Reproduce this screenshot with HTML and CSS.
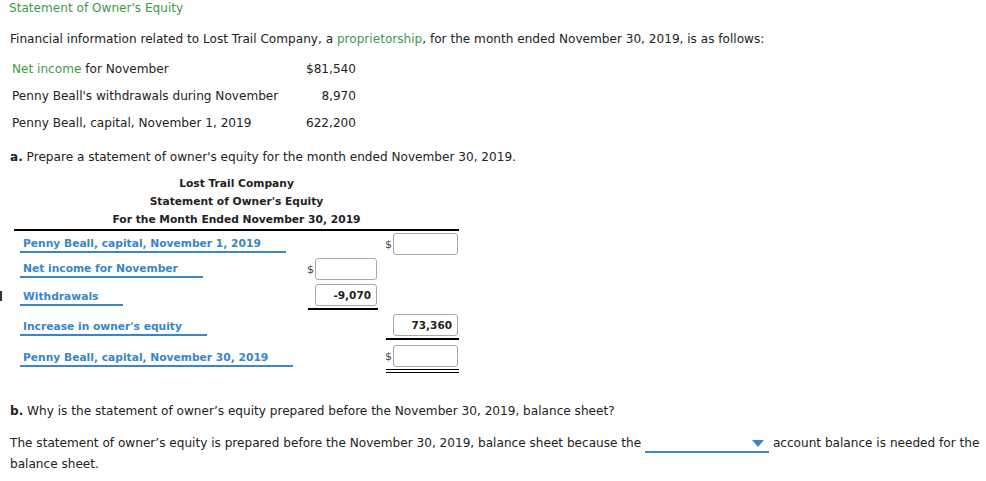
FILE: index.html
```html
<!DOCTYPE html>
<html lang="en">
<head>
  <meta charset="UTF-8" />
  <title>Statement of Owner's Equity</title>
  <link rel="stylesheet" href="styles.css">
</head>
<body>
  <div class="page">
    <div class="title">Statement of Owner's Equity</div>

    <p class="intro">Financial information related to Lost Trail Company, a <span class="term">proprietorship</span>, for the month ended November 30, 2019, is as follows:</p>

    <table class="given">
      <tr>
        <td><span class="term">Net income</span> for November</td>
        <td class="amt">$81,540</td>
      </tr>
      <tr>
        <td>Penny Beall's withdrawals during November</td>
        <td class="amt">8,970</td>
      </tr>
      <tr>
        <td>Penny Beall, capital, November 1, 2019</td>
        <td class="amt">622,200</td>
      </tr>
    </table>

    <p class="question"><b>a.</b> Prepare a statement of owner's equity for the month ended November 30, 2019.</p>

    <div class="statement">
      <div class="heading">
        <div>Lost Trail Company</div>
        <div>Statement of Owner's Equity</div>
        <div>For the Month Ended November 30, 2019</div>
      </div>

      <div class="row r1">
        <div class="label"><span>Penny Beall, capital, November 1, 2019</span></div>
        <div class="cell c1"></div>
        <div class="cell c2"><span class="dollar">$</span><input class="box" type="text"></div>
      </div>
      <div class="row r2">
        <div class="label"><span>Net income for November</span></div>
        <div class="cell c1"><span class="dollar">$</span><input class="box" type="text"></div>
        <div class="cell c2"></div>
      </div>
      <div class="row r3">
        <span class="marker"></span>
        <div class="label"><span>Withdrawals</span></div>
        <div class="cell c1 single"><input class="box" type="text" value="-9,070"></div>
        <div class="cell c2"></div>
      </div>
      <div class="row r4">
        <div class="label"><span>Increase in owner's equity</span></div>
        <div class="cell c1"></div>
        <div class="cell c2 single"><input class="box" type="text" value="73,360"></div>
      </div>
      <div class="row r5">
        <div class="label"><span>Penny Beall, capital, November 30, 2019</span></div>
        <div class="cell c1"></div>
        <div class="cell c2 double"><span class="dollar">$</span><input class="box" type="text"></div>
      </div>
    </div>

    <p class="question b"><b>b.</b> Why is the statement of owner’s equity prepared before the November 30, 2019, balance sheet?</p>

    <p class="answer">The statement of owner’s equity is prepared before the November 30, 2019, balance sheet because the <span class="select"><span class="arrow"></span></span> account balance is needed for the balance sheet.</p>
  </div>
</body>
</html>
```

FILE: styles.css
```css
body {
  margin: 0;
  padding: 0;
  font-family: 'DejaVu Sans', Verdana, sans-serif;
  font-size: 12.1px;
  color: #222;
  background: #fff;
}
.page {
  position: relative;
  padding: 0 0 0 9px;
}
.title {
  color: #3f9b46;
  line-height: 16px;
}
.term {
  color: #3f9b46;
}
.intro {
  margin: 15px 0 0 1px;
  line-height: 16px;
}
.given {
  border-collapse: collapse;
  width: 344px;
  margin: 8px 0 0 3px;
}
.given td {
  padding: 0;
  height: 27px;
}
.given .amt {
  text-align: right;
}
.question {
  margin: 13px 0 0 1px;
  line-height: 16px;
}
.statement {
  width: 445px;
  margin: 10px 0 0 5px;
}
.heading {
  text-align: center;
  font-weight: bold;
  font-size: 10.7px;
  line-height: 18px;
  border-bottom: 2px solid #000;
}
.row {
  position: relative;
  display: grid;
  grid-template-columns: 294px 70px 81px;
  align-items: end;
}
.r1 { height: 25px; }
.r2 { height: 26px; }
.r3 { height: 28px; }
.r4 { height: 30px; }
.r5 { height: 33px; }
.label {
  padding-left: 6px;
  white-space: nowrap;
}
.label span {
  display: inline-block;
  color: #3a86c8;
  font-weight: bold;
  font-size: 10.7px;
  line-height: 15px;
  padding: 0 25px 0 3px;
  border-bottom: 2px solid #3a86c8;
}
.r1 .label span { margin-bottom: 3px; }
.r2 .label span,
.r3 .label span,
.r4 .label span { margin-bottom: 4px; }
.r5 .label span { margin-bottom: 6px; }
.cell {
  display: flex;
  align-items: center;
  justify-content: flex-end;
  padding: 0 1px 2px 0;
}
.r1 .cell { padding-bottom: 1px; }
.c2 {
  margin-left: 8px;
}
.c1 .box {
  width: 62px;
}
.dollar {
  font-size: 11px;
  color: #444;
  margin-right: 1px;
}
.box {
  box-sizing: border-box;
  width: 65px;
  height: 22px;
  border: 1px solid #a9a9a9;
  border-radius: 3px;
  padding: 0 5px;
  font-family: 'DejaVu Sans', Verdana, sans-serif;
  font-size: 10.5px;
  font-weight: bold;
  color: #222;
  text-align: right;
  background: #fff;
}
.cell.single {
  border-bottom: 2px solid #000;
}
.cell.double {
  border-bottom: 4px double #000;
}
.marker {
  position: absolute;
  left: -14px;
  top: 9px;
  width: 2px;
  height: 10px;
  background: #333;
}
.question.b {
  margin-top: 30px;
}
.answer {
  margin: 14px 0 0 1px;
  line-height: 21px;
}
.select {
  display: inline-block;
  position: relative;
  width: 124px;
  height: 16px;
  vertical-align: -6px;
  border-bottom: 2px solid #3a86c8;
}
.arrow {
  position: absolute;
  right: 5px;
  top: 5px;
  width: 0;
  height: 0;
  border-left: 6px solid transparent;
  border-right: 6px solid transparent;
  border-top: 7px solid #3a86c8;
}
```
